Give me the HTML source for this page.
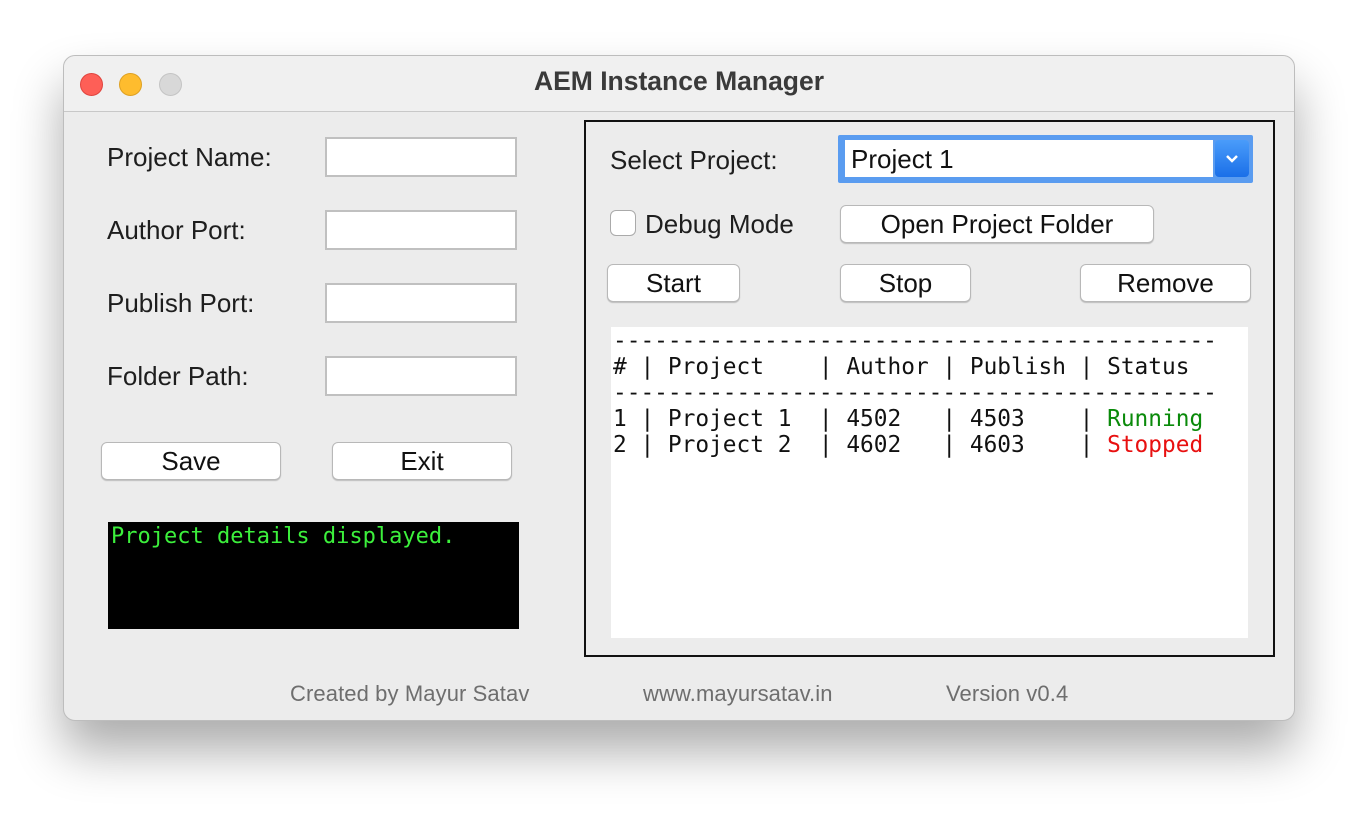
<!DOCTYPE html>
<html><head><meta charset="utf-8"><style>
*{margin:0;padding:0;box-sizing:border-box}
body{width:1358px;height:816px;background:#fff;position:relative;overflow:hidden;font-family:"Liberation Sans",sans-serif;color:#1a1a1a}
.a{position:absolute;white-space:pre}
.win{position:absolute;left:63px;top:55px;width:1232px;height:666px;border-radius:12px;background:#ececec;border:1px solid #bdbdbd;box-shadow:0 30px 50px rgba(0,0,0,.33)}
.tb{position:absolute;left:0;top:0;width:100%;height:56px;background:#f0f0f0;border-bottom:1px solid #c8c8c8;border-radius:12px 12px 0 0}
.dot{position:absolute;top:17px;width:23px;height:23px;border-radius:50%}
.lbl{font-size:26px;color:#1e1e1e}
.in{position:absolute;width:192px;height:40px;background:#fff;border:2px solid #c0c0c0}
.btn{position:absolute;height:38px;background:#fff;border:1px solid #b8b8b8;border-radius:6px;box-shadow:0 1px 1px rgba(0,0,0,.2);font-size:26px;text-align:center;line-height:36px;color:#111}
.mono{font-family:"DejaVu Sans Mono",monospace;font-size:22.8px;line-height:26px}
.ft{font-size:22px;color:#6e6e6e;letter-spacing:0.1px}
</style></head><body>
<div class="win">
 <div class="tb"></div>
 <div class="dot" style="left:16px;background:#fe5f57;border:1px solid #e0443e"></div>
 <div class="dot" style="left:55px;background:#febc2e;border:1px solid #dea123"></div>
 <div class="dot" style="left:95px;background:#d8d8d8;border:1px solid #c4c4c4"></div>
</div>
<div class="a" style="left:0;width:1358px;top:66px;text-align:center;font-size:26.5px;font-weight:bold;color:#3a3a3a">AEM Instance Manager</div>

<div class="a lbl" style="left:107px;top:142px">Project Name:</div>
<div class="a lbl" style="left:107px;top:215px">Author Port:</div>
<div class="a lbl" style="left:107px;top:288px">Publish Port:</div>
<div class="a lbl" style="left:107px;top:361px">Folder Path:</div>
<div class="in" style="left:325px;top:137px"></div>
<div class="in" style="left:325px;top:210px"></div>
<div class="in" style="left:325px;top:283px"></div>
<div class="in" style="left:325px;top:356px"></div>
<div class="btn" style="left:101px;top:442px;width:180px">Save</div>
<div class="btn" style="left:332px;top:442px;width:180px">Exit</div>
<div class="a" style="left:108px;top:522px;width:411px;height:107px;background:#000"></div>
<div class="a mono" style="left:111px;top:524px;color:#3cf03c;font-size:22px">Project details displayed.</div>

<div class="a" style="left:584px;top:120px;width:691px;height:537px;border:2px solid #111"></div>
<div class="a lbl" style="left:610px;top:145px">Select Project:</div>
<div class="a" style="left:838px;top:135px;width:415px;height:48px;background:#5a9cf0;border-radius:2px"></div>
<div class="a" style="left:845px;top:140px;width:368px;height:37px;background:#fff"></div>
<div class="a" style="left:1215px;top:140px;width:34px;height:37px;background:linear-gradient(#4a9cfa,#1a6fe8);border-radius:4px"></div>
<svg class="a" style="left:1224px;top:152px" width="16" height="14"><path d="M3 4 L8 9 L13 4" stroke="#fff" stroke-width="2.5" fill="none"/></svg>
<div class="a lbl" style="left:851px;top:144px;color:#111">Project 1</div>
<div class="a" style="left:610px;top:210px;width:26px;height:26px;background:#fff;border:1px solid #aaa;border-radius:6px"></div>
<div class="a lbl" style="left:645px;top:209px">Debug Mode</div>
<div class="btn" style="left:840px;top:205px;width:314px">Open Project Folder</div>
<div class="btn" style="left:607px;top:264px;width:133px">Start</div>
<div class="btn" style="left:840px;top:264px;width:131px">Stop</div>
<div class="btn" style="left:1080px;top:264px;width:171px">Remove</div>
<div class="a" style="left:611px;top:327px;width:637px;height:311px;background:#fff"></div>
<div class="a mono" style="left:613px;top:328px;color:#111">--------------------------------------------
# | Project    | Author | Publish | Status
--------------------------------------------
</div>
<div class="a mono" style="left:613px;top:406px;color:#111">1 | Project 1  | 4502   | 4503    | <span style="color:#0a8a0a">Running</span>
2 | Project 2  | 4602   | 4603    | <span style="color:#e81010">Stopped</span></div>

<div class="a ft" style="left:290px;top:681px">Created by Mayur Satav</div>
<div class="a ft" style="left:643px;top:681px">www.mayursatav.in</div>
<div class="a ft" style="left:946px;top:681px">Version v0.4</div>
</body></html>
